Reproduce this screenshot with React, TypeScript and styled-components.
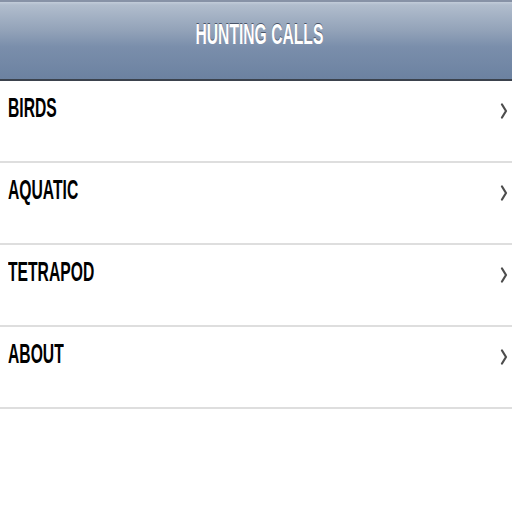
import React from "react";
import styled, { createGlobalStyle } from "styled-components";

const Global = createGlobalStyle`
  html, body { margin: 0; padding: 0; background: #ffffff; }
  body { font-family: "Liberation Sans", Arial, sans-serif; }
`;

const Page = styled.div`
  width: 512px;
  height: 512px;
  background: #ffffff;
  display: flex;
  flex-direction: column;
  overflow: hidden;
`;

const Header = styled.header`
  height: 77px;
  border-top: 2px solid #8792a6;
  border-bottom: 2px solid #3b424d;
  background: linear-gradient(to bottom, #c2ccd9 0px, #b1bdcd 3px, #93a3b9 28px, #7a8eab 45px, #6c82a1 77px);
  display: flex;
  justify-content: center;
  align-items: flex-start;
  padding-left: 7px;
`;

const Title = styled.span`
  display: inline-block;
  margin-top: 16px;
  font-size: 29px;
  line-height: 32px;
  font-weight: bold;
  color: #ffffff;
  text-shadow: 0 -1px 0 #4a5568;
  transform: scaleX(0.54);
  transform-origin: center;
  white-space: nowrap;
`;

const List = styled.ul`
  list-style: none;
  margin: 0;
  padding: 0;
`;

const Row = styled.li`
  height: 80px;
  border-bottom: 2px solid #dedede;
  display: flex;
  justify-content: space-between;
  align-items: flex-start;
  padding: 0 4px 0 8px;
`;

const Label = styled.span`
  display: inline-block;
  margin-top: 11px;
  font-size: 28px;
  line-height: 32px;
  font-weight: bold;
  color: #000000;
  transform: scaleX(0.56);
  transform-origin: left center;
  white-space: nowrap;
`;

const Chevron = styled.svg`
  margin-top: 22px;
  width: 8px;
  height: 16px;
`;

const items = ["BIRDS", "AQUATIC", "TETRAPOD", "ABOUT"];

export default function App() {
  return (
    <Page>
      <Global />
      <Header>
        <Title>HUNTING CALLS</Title>
      </Header>
      <List>
        {items.map((t) => (
          <Row key={t}>
            <Label>{t}</Label>
            <Chevron viewBox="0 0 8 16">
              <path d="M2 1.5 L6 8 L2 14.5" fill="none" stroke="#4d4d4d" strokeWidth="2.2" strokeLinecap="round" strokeLinejoin="round" />
            </Chevron>
          </Row>
        ))}
      </List>
    </Page>
  );
}
